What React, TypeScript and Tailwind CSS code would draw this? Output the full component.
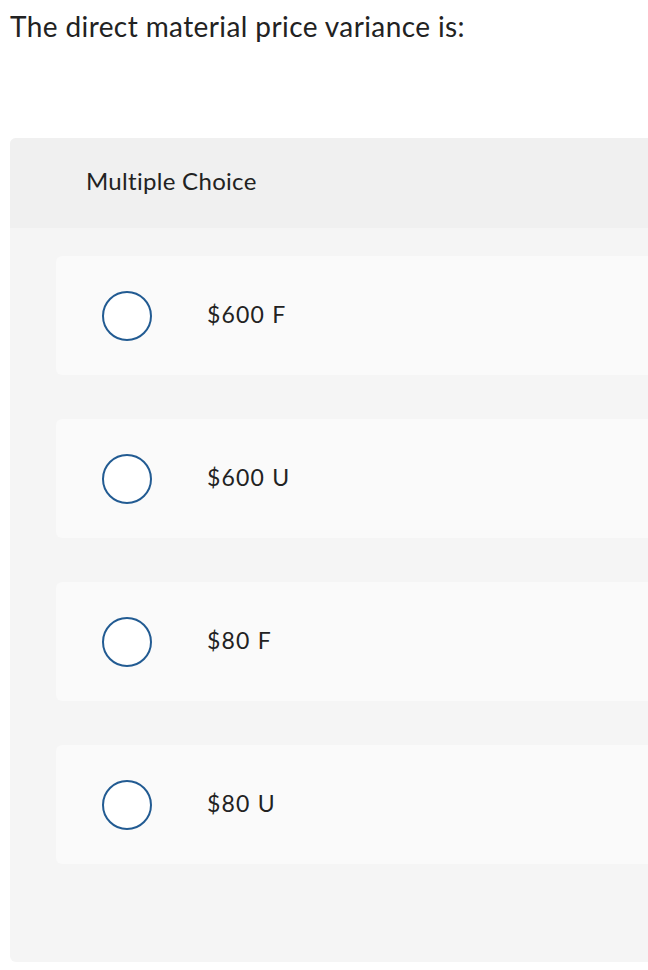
const options = ["$600 F", "$600 U", "$80 F", "$80 U"];

function OptionRow({ label }: { label: string }) {
  return (
    <label className="flex h-[119px] cursor-pointer items-center rounded-l-[6px] bg-[#fafafa] pl-[46px]">
      <span className="h-[50px] w-[50px] shrink-0 rounded-full border-[2.5px] border-[#225b92] bg-white" />
      <span className="ml-[55px] -mt-[2px] text-[23px] tracking-[1.2px] text-[#222222]">
        {label}
      </span>
    </label>
  );
}

export default function App() {
  return (
    <div className="h-[970px] overflow-hidden bg-white font-['Lato',sans-serif] [font-variant-ligatures:none]">
      <h1 className="px-[10px] pt-[6px] text-[28px] leading-[40px] font-normal tracking-[0.4px] text-[#222222]">
        The direct material price variance is:
      </h1>
      <div className="ml-[10px] mt-[92px] rounded-l-[6px] bg-[#f5f5f5]">
        <div className="flex h-[90px] items-center rounded-tl-[6px] bg-[#f0f0f0] pb-[4px] pl-[76px] text-[24px] tracking-[0.3px] text-[#222222]">
          Multiple Choice
        </div>
        <div className="flex flex-col gap-[44px] pb-[98px] pl-[46px] pt-[28px]">
          {options.map((o) => (
            <OptionRow key={o} label={o} />
          ))}
        </div>
      </div>
    </div>
  );
}
